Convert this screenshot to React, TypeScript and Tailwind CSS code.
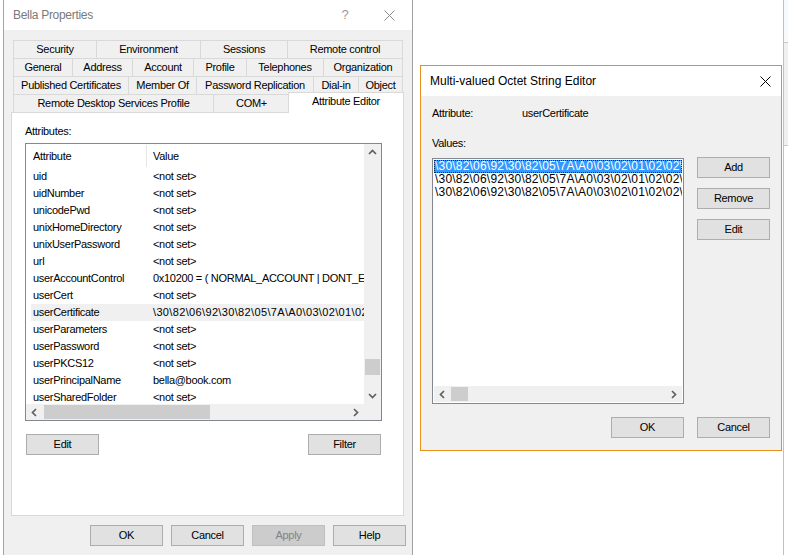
import React from "react";

const txt = "text-[11px] tracking-[-0.3px] leading-[13px]";

const tabRows: [string, number][][] = [
  [["Security", 83], ["Environment", 104], ["Sessions", 87], ["Remote control", 116]],
  [["General", 59], ["Address", 60], ["Account", 61], ["Profile", 53], ["Telephones", 77], ["Organization", 80]],
  [["Published Certificates", 115], ["Member Of", 68], ["Password Replication", 117], ["Dial-in", 45], ["Object", 45]],
];

const cert = "\\30\\82\\06\\92\\30\\82\\05\\7A\\A0\\03\\02\\01\\02\\02\\13\\5B\\00\\00\\00";

const attrs: [string, string][] = [
  ["uid", "<not set>"],
  ["uidNumber", "<not set>"],
  ["unicodePwd", "<not set>"],
  ["unixHomeDirectory", "<not set>"],
  ["unixUserPassword", "<not set>"],
  ["url", "<not set>"],
  ["userAccountControl", "0x10200 = ( NORMAL_ACCOUNT | DONT_EXPIRE_PASSWORD )"],
  ["userCert", "<not set>"],
  ["userCertificate", cert],
  ["userParameters", "<not set>"],
  ["userPassword", "<not set>"],
  ["userPKCS12", "<not set>"],
  ["userPrincipalName", "bella@book.com"],
  ["userSharedFolder", "<not set>"],
];

const Chevron = ({ dir }: { dir: "up" | "down" | "left" | "right" }) => {
  const d = {
    up: "M1 6 4.5 2.5 8 6",
    down: "M1 3 4.5 6.5 8 3",
    left: "M6 1 2.5 4.5 6 8",
    right: "M3 1 6.5 4.5 3 8",
  }[dir];
  return (
    <svg width="9" height="9" viewBox="0 0 9 9">
      <path d={d} fill="none" stroke="#606060" strokeWidth="1.7" />
    </svg>
  );
};

const CloseIcon = ({ color }: { color: string }) => (
  <svg width="11" height="11" viewBox="0 0 11 11">
    <path d="M0.5 0.5 10.5 10.5 M10.5 0.5 0.5 10.5" stroke={color} strokeWidth="1" />
  </svg>
);

const WinButton = ({ label, disabled = false, className = "" }: { label: string; disabled?: boolean; className?: string }) => (
  <button
    className={`h-[21px] w-[73px] shrink-0 border ${txt} ${
      disabled ? "border-[#bfbfbf] bg-[#cccccc] text-[#838383]" : "border-[#adadad] bg-[#e1e1e1] text-black"
    } ${className}`}
  >
    {label}
  </button>
);

const Tab = ({ label, width, last }: { label: string; width: number; last?: boolean }) => (
  <div
    style={{ width }}
    className={`flex h-[18px] shrink-0 items-center justify-center border-l border-t border-[#d9d9d9] bg-[#f0f0f0] ${txt} ${
      last ? "border-r" : ""
    }`}
  >
    {label}
  </div>
);

const AttributeList = () => (
  <div className="flex h-[278px] w-[357px] border border-[#828790] bg-white">
    <div className="flex w-[338px] flex-col">
      <div className={`flex h-[24px] items-center ${txt}`}>
        <div className="w-[120px] pl-[7px]">Attribute</div>
        <div className="h-[22px] w-px bg-[#e5e5e5]" />
        <div className="pl-[6px]">Value</div>
      </div>
      <div className="h-[236px] overflow-hidden pl-[5px]">
        {attrs.map(([name, value]) => {
          const selected = name === "userCertificate";
          return (
            <div
              key={name}
              className={`flex h-[17px] w-[333px] items-center overflow-hidden whitespace-nowrap ${txt} ${
                selected ? "bg-[#f0f0f0]" : ""
              }`}
            >
              <span className="w-[122px] shrink-0 pl-[2px]">{name}</span>
              <span className={selected ? "tracking-[0.35px]" : ""}>{value}</span>
            </div>
          );
        })}
      </div>
      <div className="flex h-[16px] bg-[#f0f0f0]">
        <div className="flex w-[17px] items-center justify-center">
          <Chevron dir="left" />
        </div>
        <div className="my-[1px] ml-px w-[166px] bg-[#cdcdcd]" />
        <div className="ml-auto flex w-[17px] items-center justify-center">
          <Chevron dir="right" />
        </div>
      </div>
    </div>
    <div className="flex w-[17px] flex-col bg-[#f0f0f0]">
      <div className="flex h-[17px] items-center justify-center">
        <Chevron dir="up" />
      </div>
      <div className="h-[226px]">
        <div className="mx-px mt-[198px] h-[16px] bg-[#cdcdcd]" />
      </div>
      <div className="flex h-[17px] items-center justify-center">
        <Chevron dir="down" />
      </div>
    </div>
  </div>
);

const BellaDialog = () => (
  <div className="flex w-[410px] shrink-0 flex-col border-l border-r border-l-[#86a9d6] border-r-[#a0a0a0]">
    <div className="flex h-[30px] items-center bg-white">
      <span className="pl-[9px] text-[12px] tracking-[-0.3px] text-[#7a7a7a]">Bella Properties</span>
      <span className="ml-auto w-[46px] text-center text-[13px] text-[#9a9a9a]">?</span>
      <span className="mr-[2px] flex w-[42px] justify-center">
        <CloseIcon color="#8a8a8a" />
      </span>
    </div>
    <div className="flex flex-1 flex-col bg-[#f0f0f0] pt-[10px]">
      <div className="ml-[9px] flex flex-col">
        {tabRows.map((row, i) => (
          <div key={i} className="flex">
            {row.map(([label, w], j) => (
              <Tab key={label} label={label} width={w} last={j === row.length - 1} />
            ))}
          </div>
        ))}
        <div className="flex h-[18px]">
          <Tab label="Remote Desktop Services Profile" width={200} />
          <Tab label="COM+" width={76} />
          <div
            className={`relative z-10 -ml-px -mt-[2px] flex h-[21px] w-[116px] shrink-0 justify-center border-l border-r border-t border-[#d9d9d9] bg-white pt-[2px] ${txt}`}
          >
            Attribute Editor
          </div>
        </div>
      </div>
      <div className="ml-[7px] flex h-[404px] w-[393px] flex-col border border-[#d9d9d9] bg-white pl-[13px] pt-[12px]">
        <div className={txt}>Attributes:</div>
        <div className="mt-[5px]">
          <AttributeList />
        </div>
        <div className="mt-[13px] flex w-[357px] justify-between">
          <WinButton label="Edit" className="ml-px" />
          <WinButton label="Filter" className="mr-px" />
        </div>
      </div>
      <div className="ml-[86px] mt-[9px] flex gap-[8px]">
        <WinButton label="OK" />
        <WinButton label="Cancel" />
        <WinButton label="Apply" disabled />
        <WinButton label="Help" />
      </div>
    </div>
  </div>
);

const ValuesList = () => (
  <div className="flex h-[246px] w-[252px] shrink-0 flex-col border border-[#828790] bg-white p-px">
    <div className="h-[226px] overflow-hidden">
      {[0, 1, 2].map((i) => (
        <div
          key={i}
          className={`h-[13px] overflow-hidden whitespace-nowrap pl-px text-[12px] leading-[13px] tracking-[0.2px] ${
            i === 0 ? "bg-[#3399ff] text-white outline-1 -outline-offset-1 outline-dotted outline-[#0b2f5c]" : "text-black"
          }`}
        >
          {cert}
        </div>
      ))}
    </div>
    <div className="flex h-[16px] bg-[#f0f0f0]">
      <div className="flex w-[17px] items-center justify-center">
        <Chevron dir="left" />
      </div>
      <div className="my-[1px] w-[17px] bg-[#cdcdcd]" />
      <div className="ml-auto flex w-[17px] items-center justify-center">
        <Chevron dir="right" />
      </div>
    </div>
  </div>
);

const OctetEditor = () => (
  <div className="flex h-[386px] w-[362px] flex-col border border-[#e8901c]">
    <div className="flex h-[30px] items-center bg-white">
      <span className="pl-[9px] text-[12px] text-black">Multi-valued Octet String Editor</span>
      <span className="ml-auto flex w-[32px] justify-center">
        <CloseIcon color="#000" />
      </span>
    </div>
    <div className="flex flex-1 flex-col bg-[#f0f0f0] pl-[11px] pt-[11px]">
      <div className={`flex ${txt}`}>
        <span className="w-[90px]">Attribute:</span>
        <span>userCertificate</span>
      </div>
      <div className={`mt-[17px] ${txt}`}>Values:</div>
      <div className="mt-[7px] flex gap-[13px]">
        <div className="mt-px">
          <ValuesList />
        </div>
        <div className="flex flex-col gap-[10px]">
          <WinButton label="Add" />
          <WinButton label="Remove" />
          <WinButton label="Edit" />
        </div>
      </div>
      <div className="mt-[13px] flex justify-end gap-[13px] pr-[11px]">
        <WinButton label="OK" />
        <WinButton label="Cancel" />
      </div>
    </div>
  </div>
);

export default function App() {
  return (
    <div className="flex h-[555px] w-[788px] overflow-hidden bg-white font-['Liberation_Sans',Arial,sans-serif] text-black">
      <div className="w-[3px] shrink-0 bg-white" />
      <BellaDialog />
      <div className="w-[370px] shrink-0 bg-white pl-[7px] pt-[65px]">
        <OctetEditor />
      </div>
      <div className="flex w-[5px] shrink-0 flex-col border-l border-[#a8c4e8]">
        <div className="h-[42px] bg-[#f7fafd]" />
        <div className="h-px bg-[#c8c8c8]" />
        <div className="h-[102px] bg-[#f0f0f0]" />
        <div className="h-px bg-[#c8c8c8]" />
        <div className="flex-1 bg-white" />
      </div>
    </div>
  );
}
